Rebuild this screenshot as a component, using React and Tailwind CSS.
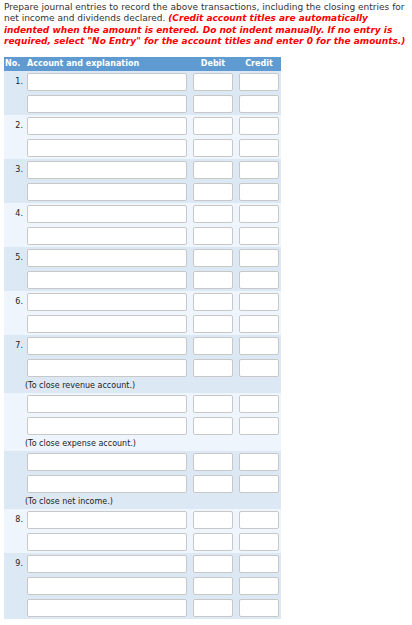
import React from "react";

const groups = [
  { num: "1.", rows: 2 },
  { num: "2.", rows: 2 },
  { num: "3.", rows: 2 },
  { num: "4.", rows: 2 },
  { num: "5.", rows: 2 },
  { num: "6.", rows: 2 },
  { num: "7.", rows: 2, label: "(To close revenue account.)" },
  { num: "", rows: 2, label: "(To close expense account.)" },
  { num: "", rows: 2, label: "(To close net income.)" },
  { num: "8.", rows: 2 },
  { num: "9.", rows: 3 },
];

function Row({ num }) {
  return (
    <div className="flex h-[22px] items-center">
      <div className="w-[23px] pr-[4px] text-right text-[8px] text-[#222]">{num}</div>
      <div className="h-[18px] w-[160px] rounded-[2px] border border-[#c8c8c8] bg-white" />
      <div className="ml-[6px] h-[18px] w-[40px] rounded-[2px] border border-[#c8c8c8] bg-white" />
      <div className="ml-[6px] h-[18px] w-[40px] rounded-[2px] border border-[#c8c8c8] bg-white" />
    </div>
  );
}

export default function App() {
  return (
    <div className="min-h-[625px] bg-white" style={{ fontFamily: '"DejaVu Sans", Verdana, sans-serif' }}>
      <div className="px-[4px] pt-[2px] text-[9px] leading-[11.3px] text-[#333]">
        Prepare journal entries to record the above transactions, including the closing entries for
        <br />
        net income and dividends declared.{" "}
        <span className="font-bold italic text-[#ff0000]">
          (Credit account titles are automatically
          <br />
          indented when the amount is entered. Do not indent manually. If no entry is
          <br />
          required, select "No Entry" for the account titles and enter 0 for the amounts.)
        </span>
      </div>
      <div className="ml-[4px] mt-[10px] w-[277px]">
        <div className="flex h-[14px] items-center bg-[#5f9bd0] text-[8px] font-bold text-white">
          <div className="w-[23px] pl-[1px]">No.</div>
          <div className="w-[166px]">Account and explanation</div>
          <div className="w-[40px] text-center">Debit</div>
          <div className="ml-[6px] w-[40px] text-center">Credit</div>
        </div>
        {groups.map((g, i) => (
          <div key={i} className={i % 2 === 0 ? "bg-[#dde8f5]" : "bg-[#eef5fd]"}>
            {Array.from({ length: g.rows }).map((_, r) => (
              <Row key={r} num={r === 0 ? g.num : ""} />
            ))}
            {g.label && (
              <div className="flex h-[14px] items-center pl-[21px] text-[8px] text-[#222]">{g.label}</div>
            )}
          </div>
        ))}
      </div>
    </div>
  );
}
